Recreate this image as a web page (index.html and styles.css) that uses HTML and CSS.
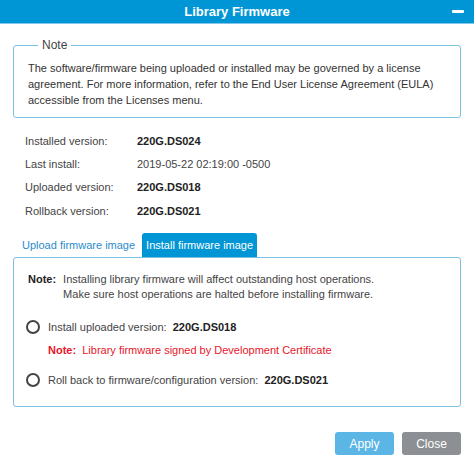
FILE: index.html
```html
<!DOCTYPE html>
<html>
<head>
<meta charset="utf-8">
<link rel="stylesheet" href="styles.css">
</head>
<body>
<div class="dialog">
  <div class="header">
    <span></span>
    <span class="title">Library Firmware</span>
    <span class="minbox"><span class="minus"></span></span>
  </div>
  <div class="content">
    <fieldset class="note">
      <legend>Note</legend>
      <p>The software/firmware being uploaded or installed may be governed by a license agreement. For more information, refer to the End User License Agreement (EULA) accessible from the Licenses menu.</p>
    </fieldset>
    <div class="info">
      <div class="lbl">Installed version:</div><div class="val b">220G.DS024</div>
      <div class="lbl">Last install:</div><div class="val">2019-05-22 02:19:00 -0500</div>
      <div class="lbl">Uploaded version:</div><div class="val b">220G.DS018</div>
      <div class="lbl">Rollback version:</div><div class="val b">220G.DS021</div>
    </div>
    <div class="tabs">
      <span class="tab">Upload firmware image</span>
      <span class="tab active">Install firmware image</span>
    </div>
    <div class="panel">
      <div class="pnote">
        <span class="b">Note:</span>
        <span>Installing library firmware will affect outstanding host operations.<br>Make sure host operations are halted before installing firmware.</span>
      </div>
      <div class="radio-row r1"><span class="radio"></span><span>Install uploaded version:&nbsp; <b>220G.DS018</b></span></div>
      <div class="red"><b>Note:</b>&nbsp; Library firmware signed by Development Certificate</div>
      <div class="radio-row r2"><span class="radio"></span><span>Roll back to firmware/configuration version:&nbsp; <b>220G.DS021</b></span></div>
    </div>
    <div class="buttons">
      <button class="btn apply">Apply</button>
      <button class="btn close">Close</button>
    </div>
  </div>
</div>
</body>
</html>
```
FILE: styles.css
```css
html, body {
  margin: 0;
  padding: 0;
  background: #fff;
}
body {
  font-family: "Liberation Sans", Arial, sans-serif;
  font-size: 11px;
  color: #333;
  width: 474px;
  height: 470px;
  overflow: hidden;
}
.header {
  height: 24px;
  background: #0096d6;
  display: grid;
  grid-template-columns: 1fr auto 1fr;
  align-items: center;
  border-bottom: 1px solid #7fc6e8;
  box-sizing: border-box;
}
.title {
  color: #fff;
  font-weight: bold;
  font-size: 13px;
}
.minbox {
  display: flex;
  justify-content: flex-end;
  padding-right: 10px;
}
.minus {
  width: 12px;
  height: 3px;
  background: #fff;
  border-radius: 1px;
}
.content {
  padding: 0 13px;
}
.note {
  margin: 14px 0 0;
  border: 1px solid #7cc3e3;
  border-radius: 3px;
  padding: 8px 14px 9px;
}
.note legend {
  padding: 0 4px;
  margin-left: 10px;
  color: #444;
  line-height: 14px;
  font-size: 12px;
}
.note p {
  margin: 0;
  line-height: 16px;
  color: #333;
}
.info {
  display: grid;
  grid-template-columns: 112px auto;
  grid-auto-rows: 23.3px;
  align-items: center;
  padding: 11px 0 0 12px;
}
.lbl { color: #444; }
.b { font-weight: bold; color: #222; }
.val { color: #444; }
.val.b { color: #222; }
.tabs {
  display: flex;
  align-items: flex-end;
  margin-top: 11px;
  padding-left: 5px;
  gap: 3px;
}
.tab {
  padding: 0 4px;
  height: 24px;
  line-height: 24px;
  color: #2a8ccc;
  border-radius: 3px 3px 0 0;
}
.tab.active {
  background: #0096d6;
  color: #fff;
}
.panel {
  border: 1px solid #7cc3e3;
  border-radius: 3px;
  height: 150px;
  box-sizing: border-box;
  padding: 14px 14px 0;
}
.pnote {
  display: flex;
  gap: 7px;
  line-height: 15px;
  color: #444;
}
.pnote .b { color: #222; }
.radio-row {
  display: flex;
  align-items: center;
  gap: 8px;
  color: #444;
}
.radio-row b { color: #222; }
.r1 { margin-top: 15px; height: 20px; }
.r2 { margin-top: 12px; height: 20px; }
.radio {
  width: 10px;
  height: 10px;
  border: 2px solid #444;
  border-radius: 50%;
  flex: none;
  margin-left: -2px;
}
.red {
  color: #e8152b;
  margin-top: 6px;
  padding-left: 20px;
  line-height: 15px;
}
.buttons {
  display: flex;
  justify-content: flex-end;
  gap: 8px;
  margin-top: 25px;
}
.btn {
  font-family: "Liberation Sans", Arial, sans-serif;
  font-size: 12px;
  color: #fff;
  width: 59px;
  height: 23px;
  border: none;
  border-radius: 3px;
  padding: 0;
}
.apply { background: #5bb5e5; }
.close { background: #8c8f93; }
```
